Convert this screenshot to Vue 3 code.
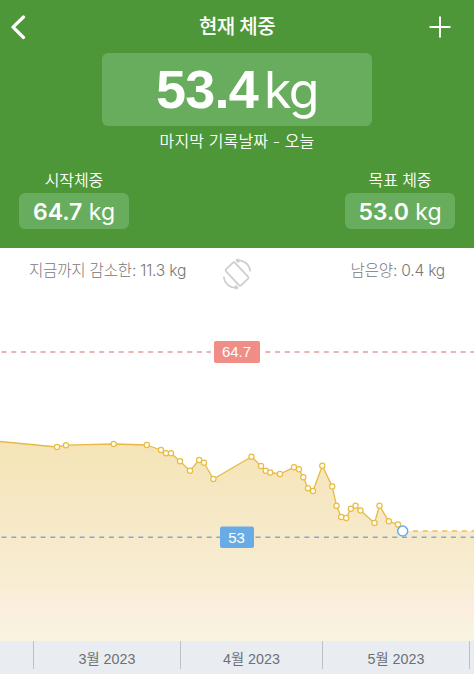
<script setup>
const points = [
  [57, 447], [66, 445.2], [113.7, 444], [146.8, 445], [161, 450], [166, 453.2], [171, 453.2],
  [180, 461.3], [190, 470.7], [199.2, 460], [204, 462.7], [213.4, 479], [251.5, 456.7], [261, 466],
  [265.7, 470.7], [270.2, 472.5], [280, 474], [294, 467.3], [299, 469.2], [303.3, 477.2],
  [308, 488.2], [313, 491], [322.3, 465.8], [332.2, 486.4], [336.5, 505.7], [341.2, 517],
  [346.2, 518], [350.8, 508.8], [355.6, 505.7], [360.5, 510.4], [374.5, 523], [379.5, 505.7],
  [388.8, 521.3], [398, 524.5]
]
const line = [[0, 441.5], ...points, [402.7, 531]].map(p => p.join(',')).join(' ')
const area = `${line} 474,531 474,641 0,641`
const months = ['3월 2023', '4월 2023', '5월 2023']
</script>

<template>
  <main class="screen">
    <header class="header">
      <nav class="nav">
        <svg class="back" width="16" height="26" viewBox="0 0 16 26"><path d="M12.5 3 2 13.2 12.5 23.5" /></svg>
        <h1>현재 체중</h1>
        <svg class="add" width="22" height="22" viewBox="0 0 22 22"><path d="M11 .5v21M.5 11h21" /></svg>
      </nav>
      <div class="current"><strong>53.4</strong><span>kg</span></div>
      <p class="date">마지막 기록날짜 - 오늘</p>
      <div class="goals">
        <section>
          <h2>시작체중</h2>
          <div class="pill"><b>64.7</b> kg</div>
        </section>
        <section>
          <h2>목표 체중</h2>
          <div class="pill"><b>53.0</b> kg</div>
        </section>
      </div>
    </header>

    <div class="summary">
      <span class="lost">지금까지 감소한: 11.3 kg</span>
      <svg class="rotate" width="30" height="32" viewBox="0 0 30 32">
        <rect x="8.8" y="5" width="12.4" height="22" rx="1.5" transform="rotate(-43 15 16)" />
        <path d="M14 2.2C21.5 1.4 27.5 6.2 28.2 13.5M14 2.2l3.2-.9M14 2.2l3 2M16 29.8C8.5 30.6 2.5 25.8 1.8 18.5M16 29.8l-3.2.9M16 29.8l-3-2" />
      </svg>
      <span class="left">남은양: 0.4 kg</span>
    </div>

    <svg class="chart" width="474" height="346" viewBox="0 295 474 346">
      <defs>
        <linearGradient id="fill" gradientUnits="userSpaceOnUse" x1="0" y1="441" x2="0" y2="641">
          <stop offset="0" stop-color="#f5e4b7" />
          <stop offset=".5" stop-color="#f7eacb" />
          <stop offset=".76" stop-color="#f9eed6" />
          <stop offset=".81" stop-color="#fbeedf" />
          <stop offset=".88" stop-color="#fbefe0" />
          <stop offset=".93" stop-color="#f8f3df" />
          <stop offset="1" stop-color="#f9f4e0" />
        </linearGradient>
      </defs>
      <polygon :points="area" fill="url(#fill)" />
      <path class="limit start" d="M0 352H474" />
      <path class="limit goal" d="M0 537.3H474" />
      <path class="future" d="M413 531H474" />
      <polyline class="trend" :points="line" />
      <circle v-for="(p, i) in points" :key="i" class="dot" :cx="p[0]" :cy="p[1]" r="2.6" />
      <circle class="today" cx="402.7" cy="531" r="5" />
      <rect x="211" y="341" width="52" height="22" fill="#fff" />
      <rect x="214" y="341" width="46" height="22" rx="2" fill="#ef8d86" />
      <text x="236.5" y="357">64.7</text>
      <rect x="220" y="526.5" width="34" height="21.5" rx="2" fill="#69ace5" />
      <text x="236.5" y="542.5">53</text>
    </svg>

    <footer class="axis">
      <span class="tick"></span>
      <span v-for="m in months" :key="m" class="tick">{{ m }}</span>
      <span class="tick"></span>
    </footer>
  </main>
</template>

<style>
body { margin: 0; background: #fff; }
</style>

<style scoped>
.screen { width: 474px; height: 674px; overflow: hidden; background: #fff; font-family: Inter, "Noto Sans CJK KR", sans-serif; }
h1, h2, p { margin: 0; font-weight: 400; }
.header { box-sizing: border-box; height: 248px; background: #4d9739; color: #fff; display: flex; flex-direction: column; align-items: center; }
.nav { box-sizing: border-box; width: 100%; height: 53px; padding: 0 23px 0 11px; display: grid; grid-template-columns: 1fr auto 1fr; align-items: center; flex: none; }
.nav svg { fill: none; stroke: #fff; }
.back { stroke-width: 3.2; stroke-linecap: round; stroke-linejoin: round; }
.add { justify-self: end; stroke-width: 2; }
.nav h1 { font-size: 20px; font-weight: 500; line-height: 28px; letter-spacing: -.6px; margin-left: 12px; }
.current { width: 270px; height: 73px; border-radius: 6px; background: #68ad5d; display: flex; justify-content: center; align-items: baseline; gap: 6px; line-height: 72px; flex: none; }
.current strong { font: 700 54px/72px "Liberation Sans", sans-serif; letter-spacing: -.8px; }
.current span { font-size: 50px; letter-spacing: -1.5px; }
.date { font-size: 16px; font-weight: 350; line-height: 24px; margin-top: 3px; letter-spacing: .12px; }
.goals { box-sizing: border-box; width: 100%; padding: 15px 19px 0; display: flex; justify-content: space-between; }
.goals h2 { font-size: 16px; font-weight: 350; line-height: 24px; text-align: center; letter-spacing: -.1px; }
.pill { width: 110px; height: 36px; line-height: 38px; border-radius: 6px; margin-top: 1px; background: #68ad5d; text-align: center; font-size: 23px; white-space: nowrap; }
.pill b { font-weight: 600; }
.summary { box-sizing: border-box; height: 47px; padding: 9px 29px 0; display: grid; grid-template-columns: 1fr 30px 1fr; color: #777; font-size: 15.6px; font-weight: 300; line-height: 28px; letter-spacing: -.23px; white-space: nowrap; }
.left { text-align: right; }
.rotate { fill: none; stroke: #cfcfcf; stroke-width: 1.8; margin-top: 1px; }
.chart { display: block; }
.limit { stroke-width: 1.4; stroke-dasharray: 5 4.77; stroke-dashoffset: -1.5; }
.start { stroke: #df9da0; }
.goal { stroke: #79add8; }
.future { stroke: #edc04b; stroke-width: 1.5; stroke-dasharray: 5 4.77; }
.trend { fill: none; stroke: #e6ba45; stroke-width: 1.3; stroke-linejoin: round; }
.dot { fill: #fffdf5; stroke: #e8bd43; stroke-width: 1.2; }
.today { fill: #fff; stroke: #69ace5; stroke-width: 1.5; }
.chart text { fill: #fff; font: 15px "Liberation Sans", sans-serif; text-anchor: middle; }
.axis { display: grid; grid-template-columns: 33px 147px 142px 147px 5px; height: 33px; background: #e9edf2; color: #6b7075; font: 14.3px/36px "Liberation Sans", "Noto Sans CJK KR", sans-serif; text-align: center; }
.tick { box-sizing: border-box; height: 28px; border-left: 1px solid #bcc1c7; white-space: nowrap; }
.tick:first-child { border-left: 0; }
</style>
